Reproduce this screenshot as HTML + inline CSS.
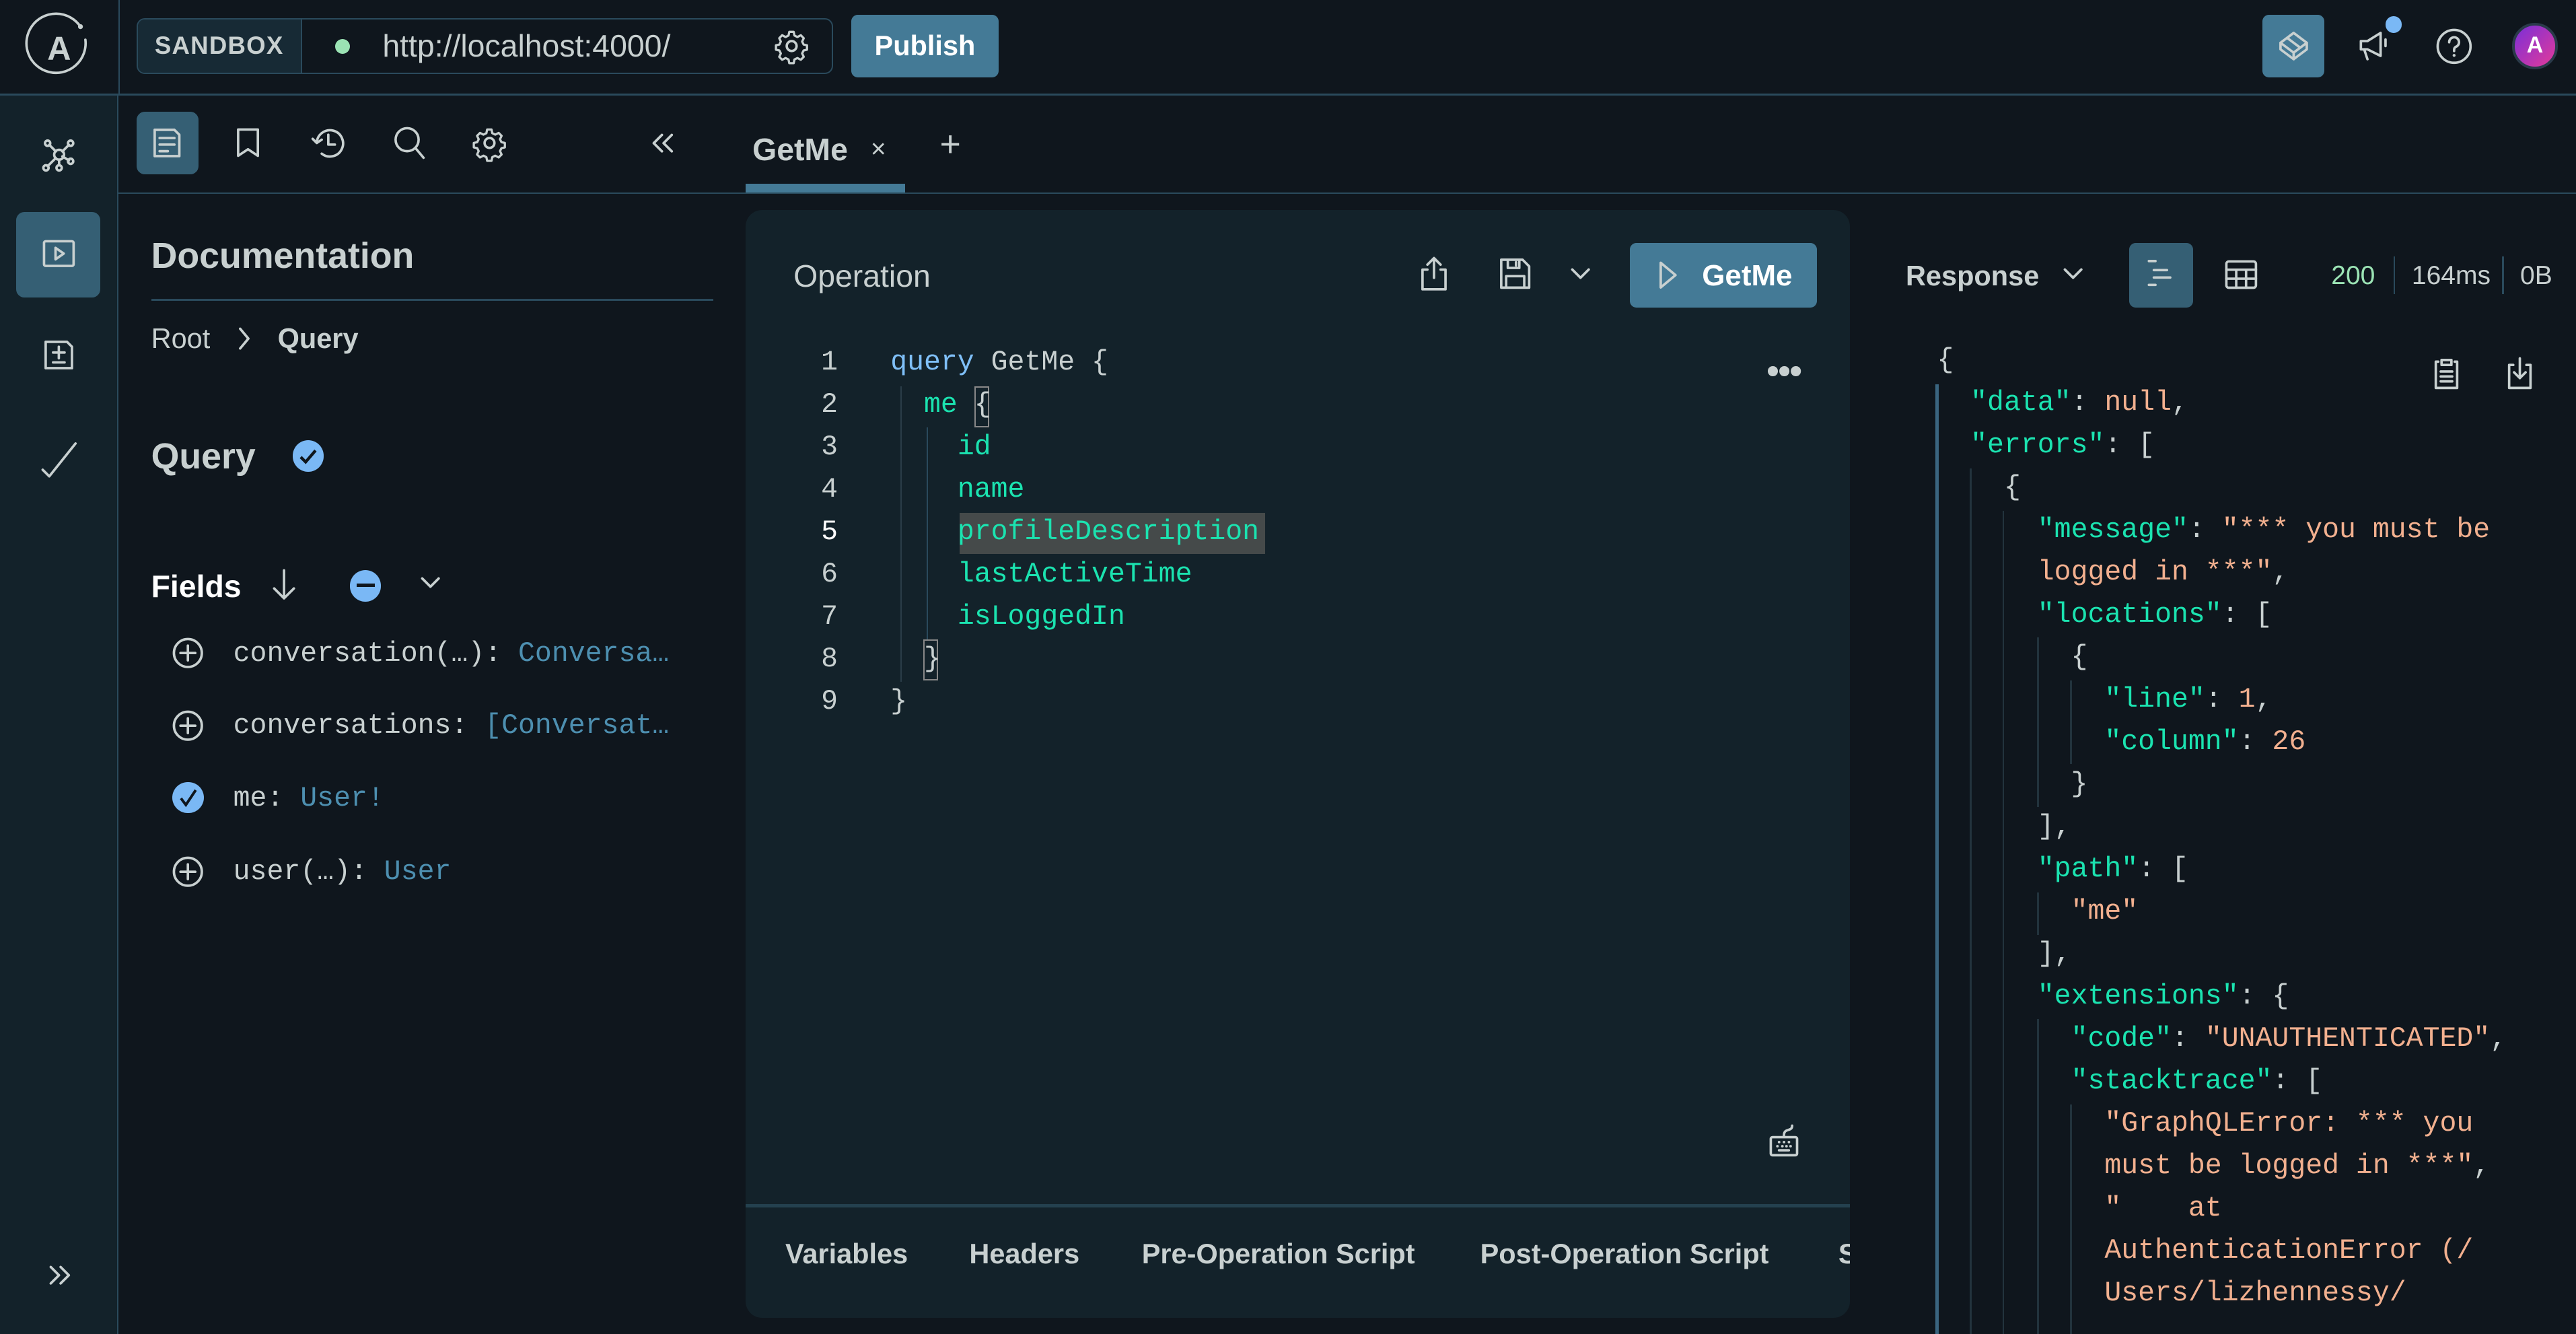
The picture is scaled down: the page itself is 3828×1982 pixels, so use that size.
<!DOCTYPE html>
<html><head><meta charset="utf-8"><style>
*{box-sizing:border-box;margin:0;padding:0}
html,body{width:3828px;height:1982px;overflow:hidden;background:#0f161d}
#w{zoom:2.44133;width:1568px;height:812px;position:relative;background:#0f161d;font-family:"Liberation Sans",sans-serif;color:#c8d0d0}
.a{position:absolute}
.mono{font-family:"Liberation Mono",monospace;font-size:17px;white-space:pre}
svg{position:absolute;overflow:visible}
.ic{fill:none;stroke:#c8d0d0;stroke-width:1.5;stroke-linecap:round;stroke-linejoin:round}
.k{color:#1be3b0}.s{color:#f2b08f}.p{color:#c8d0d0}.q{color:#7fbff7}.t{color:#4d8fb0}
.gl{position:absolute;width:1px;background:#22333d}
</style></head><body><div id="w">

<!-- left rail -->
<div class="a" style="left:0;top:57px;width:72px;height:755px;background:#13222a;border-right:1px solid #2a4a5c"></div>
<div class="a" style="left:72px;top:0;width:1px;height:57px;background:#2a4a5c"></div>
<div class="a" style="left:0;top:57px;width:1568px;height:1px;background:#2a4a5c"></div>
<div class="a" style="left:72px;top:117px;width:1496px;height:1px;background:#2a4a5c"></div>

<!-- logo -->
<svg style="left:16px;top:8px" width="40" height="40"><path class="ic" stroke-width="1.8" d="M33 8 A18 18 0 1 0 36 16"/><circle cx="33" cy="8" r="1.5" fill="#c8d0d0"/><text x="20" y="28" text-anchor="middle" font-family="Liberation Sans" font-weight="bold" font-size="20" fill="#c8d0d0">A</text></svg>

<!-- sandbox bar -->
<div class="a" style="left:83px;top:11px;width:424px;height:34px;border:1px solid #2a4a5c;border-radius:5px;overflow:hidden">
 <div class="a" style="left:0;top:0;width:100px;height:34px;background:#172a35;border-right:1px solid #2a4a5c;font-size:15px;font-weight:bold;line-height:32px;text-align:center;letter-spacing:.5px">SANDBOX</div>
 <div class="a" style="left:120px;top:12px;width:9px;height:9px;border-radius:50%;background:#9be3b4"></div>
 <div class="a" style="left:149px;top:4px;font-size:19px;line-height:24px">http://localhost:4000/</div>
</div>
<svg style="left:472px;top:18px" width="20" height="20"><circle class="ic" cx="10" cy="10" r="3"/><path class="ic" d="M8.5 1.5h3l.5 2.5 2 1 2.3-1.2 2 2-1.1 2.3 1 2 2.3.5v3l-2.3.5-1 2 1.1 2.3-2 2-2.3-1.2-2 1-.5 2.5h-3l-.5-2.5-2-1-2.3 1.2-2-2 1.1-2.3-1-2-2.3-.5v-3l2.3-.5 1-2-1.1-2.3 2-2 2.3 1.2 2-1z" transform="scale(0.9) translate(1,0)"/></svg>
<div class="a" style="left:518px;top:9px;width:90px;height:38px;background:#447a96;border-radius:4px;color:#fff;font-weight:bold;font-size:17px;line-height:38px;text-align:center">Publish</div>

<!-- top right -->
<div class="a" style="left:1377px;top:9px;width:38px;height:38px;background:#447a96;border-radius:4px"></div>
<svg style="left:1386px;top:18px" width="20" height="20"><path class="ic" stroke="#fff" d="M10 2 L18 8 L18 12 L10 18 L2 12 L2 8 Z M2 8 L10 14 L18 8 M10 14 L10 18 M6 5 L14 11"/></svg>
<svg style="left:1434px;top:18px" width="22" height="20"><path class="ic" d="M3 7h4l8-5v14l-8-4H3z M5 12l2 6 M18 6v4"/></svg>
<div class="a" style="left:1452px;top:10px;width:10px;height:10px;border-radius:50%;background:#7ab8f5"></div>
<svg style="left:1483px;top:17px" width="22" height="22"><circle class="ic" cx="11" cy="11" r="10"/><path class="ic" d="M8 8.5a3 3 0 1 1 4 2.8c-.8.4-1 1-1 2v.5"/><circle cx="11" cy="16.5" r=".9" fill="#c8d0d0"/></svg>
<div class="a" style="left:1529px;top:14px;width:28px;height:28px;border-radius:50%;background:linear-gradient(135deg,#7a2fd8,#e33a9a);border:2px solid #2a3a4a;color:#fff;font-weight:bold;font-size:14px;line-height:24px;text-align:center">A</div>

<!-- rail icons -->
<svg style="left:25px;top:83px" width="22" height="22"><circle class="ic" cx="11" cy="11" r="3"/><circle class="ic" cx="4" cy="4" r="1.6"/><circle class="ic" cx="18" cy="4" r="1.6"/><circle class="ic" cx="18" cy="15" r="1.6"/><circle class="ic" cx="3" cy="19" r="1.6"/><circle class="ic" cx="11" cy="19" r="1.6"/><path class="ic" d="M5 5l4 4M17 5l-4 4M13 12l4 2.5M9 13l-5 5M11 14v3.5"/></svg>
<div class="a" style="left:10px;top:129px;width:51px;height:52px;background:#355f74;border-radius:5px"></div>
<svg style="left:26px;top:146px" width="20" height="18"><rect class="ic" x="1" y="1" width="18" height="15" rx="1"/><path class="ic" d="M8 5l5 3.5-5 3.5z"/></svg>
<svg style="left:26px;top:206px" width="20" height="20"><path class="ic" d="M2 2h13l3 3v13H2z M10 5v7 M6.5 8.5h7 M6.5 14.5h7"/></svg>
<svg style="left:25px;top:268px" width="22" height="22"><path class="ic" d="M1 18l4 4L21 2"/></svg>
<svg style="left:30px;top:770px" width="14" height="12"><path class="ic" d="M1 1l5 5-5 5M7 1l5 5-5 5"/></svg>

<!-- second row icons -->
<div class="a" style="left:83px;top:68px;width:38px;height:38px;background:#355f74;border-radius:5px"></div>
<svg style="left:92px;top:77px" width="20" height="20"><path class="ic" d="M2 2h12l3 3v13H2z M5 7h9 M5 11h9 M5 15h5"/></svg>
<svg style="left:143px;top:78px" width="16" height="20"><path class="ic" d="M2 1h12v16l-6-4-6 4z"/></svg>
<svg style="left:189px;top:77px" width="22" height="20"><path class="ic" d="M4 10a8 8 0 1 1 3 6.5M4 10l-2.5-2.5M4 10l3-2M11 5v6h4"/></svg>
<svg style="left:239px;top:77px" width="22" height="22"><circle class="ic" cx="9" cy="8" r="7"/><path class="ic" d="M14 13l5 6"/></svg>
<svg style="left:288px;top:77px" width="20" height="20"><circle class="ic" cx="10" cy="10" r="3"/><path class="ic" d="M8.5 1h3l.5 2.5 2 1 2.3-1.2 2 2-1.1 2.3 1 2 2.3.5v3l-2.3.5-1 2 1.1 2.3-2 2-2.3-1.2-2 1-.5 2.5h-3l-.5-2.5-2-1-2.3 1.2-2-2 1.1-2.3-1-2-2.3-.5v-3l2.3-.5 1-2-1.1-2.3 2-2 2.3 1.2 2-1z" transform="scale(0.9) translate(1,1)"/></svg>
<svg style="left:397px;top:81px" width="14" height="12"><path class="ic" d="M6 1L1 6l5 5M12 1L7 6l5 5"/></svg>
<div class="a" style="left:458px;top:79px;font-size:19px;font-weight:bold;line-height:24px">GetMe</div>
<div class="a" style="left:530px;top:80px;font-size:16px;line-height:22px">×</div>
<div class="a" style="left:572px;top:75px;font-size:22px;line-height:26px">+</div>
<div class="a" style="left:454px;top:112px;width:97px;height:5px;background:#447a96"></div>

<!-- documentation panel -->
<div class="a" style="left:92px;top:143px;font-size:22px;font-weight:bold;line-height:26px">Documentation</div>
<div class="a" style="left:92px;top:182px;width:342px;height:1px;background:#2a4a5c"></div>
<div class="a" style="left:92px;top:195px;font-size:17px;line-height:22px">Root</div>
<svg style="left:144px;top:199px" width="10" height="14"><path class="ic" stroke="#8a9a9e" d="M2 1l5 6-5 6"/></svg>
<div class="a" style="left:169px;top:195px;font-size:17px;font-weight:bold;line-height:22px">Query</div>
<div class="a" style="left:92px;top:265px;font-size:22px;font-weight:bold;line-height:26px">Query</div>
<div class="a" style="left:178px;top:268px;width:19px;height:19px;border-radius:50%;background:#7ab8f5"></div>
<svg style="left:181px;top:271px" width="13" height="13"><path fill="none" stroke="#0f161d" stroke-width="1.8" d="M2 7l3 3 6-7"/></svg>
<div class="a" style="left:92px;top:345px;font-size:19px;font-weight:bold;line-height:24px;color:#fff">Fields</div>
<svg style="left:166px;top:346px" width="14" height="20"><path class="ic" d="M7 1v17M1 12l6 6 6-6"/></svg>
<div class="a" style="left:213px;top:347px;width:19px;height:19px;border-radius:50%;background:#7ab8f5"></div>
<div class="a" style="left:217px;top:355px;width:11px;height:2px;background:#0f161d"></div>
<svg style="left:256px;top:351px" width="12" height="8"><path class="ic" d="M1 1l5 5 5-5"/></svg>

<svg style="left:105px;top:388px" width="19" height="19"><circle class="ic" cx="9.5" cy="9.5" r="8.5"/><path class="ic" d="M9.5 5v9M5 9.5h9"/></svg>
<div class="a mono" style="left:142px;top:387px;line-height:22px">conversation(…): <span class="t">Conversa…</span></div>
<svg style="left:105px;top:432px" width="19" height="19"><circle class="ic" cx="9.5" cy="9.5" r="8.5"/><path class="ic" d="M9.5 5v9M5 9.5h9"/></svg>
<div class="a mono" style="left:142px;top:431px;line-height:22px">conversations: <span class="t">[Conversat…</span></div>
<div class="a" style="left:105px;top:476px;width:19px;height:19px;border-radius:50%;background:#7ab8f5"></div>
<svg style="left:108px;top:479px" width="13" height="13"><path fill="none" stroke="#0f161d" stroke-width="1.6" d="M2 7l3 4 6-9"/></svg>
<div class="a mono" style="left:142px;top:475px;line-height:22px">me: <span class="t">User!</span></div>
<svg style="left:105px;top:521px" width="19" height="19"><circle class="ic" cx="9.5" cy="9.5" r="8.5"/><path class="ic" d="M9.5 5v9M5 9.5h9"/></svg>
<div class="a mono" style="left:142px;top:520px;line-height:22px">user(…): <span class="t">User</span></div>

<!-- operation panel -->
<div class="a" style="left:454px;top:128px;width:672px;height:674px;background:#13222a;border-radius:10px"></div>
<div class="a" style="left:483px;top:156px;font-size:19px;line-height:24px">Operation</div>
<svg style="left:864px;top:156px" width="18" height="22"><path class="ic" d="M9 1v12M5 5l4-4 4 4M5 8H2v12h14V8h-3"/></svg>
<svg style="left:912px;top:156px" width="21" height="21"><path class="ic" d="M2 2h13l4 4v13H2z M6 2v5h7V2 M5 19v-7h11v7 M11 3.5v2"/></svg>
<svg style="left:956px;top:163px" width="12" height="8"><path class="ic" d="M1 1l5 5 5-5"/></svg>
<div class="a" style="left:992px;top:148px;width:114px;height:39px;background:#447a96;border-radius:4px"></div>
<svg style="left:1009px;top:159px" width="13" height="17"><path class="ic" stroke="#fff" d="M2 1l9 7.5-9 7.5z"/></svg>
<div class="a" style="left:1036px;top:156px;font-size:18px;font-weight:bold;color:#fff;line-height:24px">GetMe</div>

<!-- code -->
<div class="a mono" style="left:490px;top:208px;line-height:25.8px;color:#c8d0d0;text-align:right;width:20px">1
2
3
4
<span style="color:#fff">5</span>
6
7
8
9</div>
<div class="gl" style="left:548px;top:235px;height:180px;background:#2a3d48"></div>
<div class="gl" style="left:564px;top:260px;height:130px;background:#2a4a5c"></div>
<div class="a" style="left:584px;top:312px;width:186px;height:25px;background:#454a4a"></div>
<div class="a" style="left:593px;top:235px;width:9px;height:25px;border:1px solid #888"></div>
<div class="a" style="left:562px;top:389px;width:9px;height:25px;border:1px solid #888"></div>
<div class="a mono" style="left:542px;top:208px;line-height:25.8px"><span class="q">query</span> GetMe {
  <span class="k">me</span> {
    <span class="k">id</span>
    <span class="k">name</span>
    <span class="k">profileDescription</span>
    <span class="k">lastActiveTime</span>
    <span class="k">isLoggedIn</span>
  }
}</div>
<div class="a" style="left:1076px;top:223px;width:6px;height:6px;border-radius:50%;background:#c8d0d0;box-shadow:7px 0 #c8d0d0,14px 0 #c8d0d0"></div>
<svg style="left:1077px;top:684px" width="18" height="22"><path class="ic" d="M14 1c0 4-5 1-5 6 M2 8h14a1 1 0 0 1 1 1v9a1 1 0 0 1-1 1H2a1 1 0 0 1-1-1V9a1 1 0 0 1 1-1z M6 16h6"/><path class="ic" stroke-width="1.8" d="M6 11h.1M9 11h.1M12 11h.1M5 13.5h.1M8 13.5h.1M10.5 13.5h.1M13 13.5h.1"/></svg>
<div class="a" style="left:454px;top:733px;width:672px;height:2px;background:#24414f"></div>
<div class="a" style="left:478px;top:752px;font-size:17px;font-weight:bold;line-height:22px">Variables</div>
<div class="a" style="left:590px;top:752px;font-size:17px;font-weight:bold;line-height:22px">Headers</div>
<div class="a" style="left:695px;top:752px;font-size:17px;font-weight:bold;line-height:22px">Pre-Operation Script</div>
<div class="a" style="left:901px;top:752px;font-size:17px;font-weight:bold;line-height:22px">Post-Operation Script</div>
<div class="a" style="left:1119px;top:752px;width:7px;overflow:hidden;font-size:17px;font-weight:bold;line-height:22px">S</div>

<!-- response -->
<div class="a" style="left:1160px;top:157px;font-size:17px;font-weight:bold;line-height:22px">Response</div>
<svg style="left:1256px;top:163px" width="12" height="8"><path class="ic" d="M1 1l5 5 5-5"/></svg>
<div class="a" style="left:1296px;top:148px;width:39px;height:39px;background:#355f74;border-radius:4px"></div>
<svg style="left:1305px;top:157px" width="22" height="22"><path class="ic" d="M3 2h4M6 7.5h8M6 12h10M3 16.5h4"/></svg>
<svg style="left:1354px;top:158px" width="20" height="18"><rect class="ic" x="1" y="1" width="18" height="16" rx="1.5"/><path class="ic" d="M1 6h18M1 11.5h18M7 6v11M13 6v11"/></svg>
<div class="a" style="left:1419px;top:157px;font-size:16px;line-height:22px;color:#9be3b4">200</div>
<div class="a" style="left:1457px;top:156px;width:1px;height:23px;background:#2a4a5c"></div>
<div class="a" style="left:1468px;top:157px;font-size:16px;line-height:22px">164ms</div>
<div class="a" style="left:1523px;top:156px;width:1px;height:23px;background:#2a4a5c"></div>
<div class="a" style="left:1534px;top:157px;font-size:16px;line-height:22px">0B</div>
<svg style="left:1481px;top:217px" width="16" height="20"><path class="ic" d="M3 3H1.5v16h13V3H13 M5 2h6v3H5z M4.5 9h7M4.5 12h7M4.5 15h7"/></svg>
<svg style="left:1526px;top:217px" width="16" height="20"><path class="ic" d="M4 5H1.5v14h13V5H12 M8 1v12M4.5 9.5L8 13l3.5-3.5"/></svg>

<!-- json guides -->
<div class="gl" style="left:1178px;top:234px;height:580px;width:2px;background:#3a6580"></div>
<div class="gl" style="left:1199px;top:285px;height:529px"></div>
<div class="gl" style="left:1219px;top:311px;height:503px"></div>
<div class="gl" style="left:1240px;top:388px;height:103px"></div>
<div class="gl" style="left:1260px;top:414px;height:51px"></div>
<div class="gl" style="left:1240px;top:543px;height:26px"></div>
<div class="gl" style="left:1240px;top:620px;height:194px"></div>
<div class="gl" style="left:1260px;top:672px;height:142px"></div>

<div class="a mono" style="left:1179px;top:207px;line-height:25.8px"><span class="p">{</span>
  <span class="k">"data"</span>: <span class="s">null</span>,
  <span class="k">"errors"</span>: [
    {
      <span class="k">"message"</span>: <span class="s">"*** you must be</span>
      <span class="s">logged in ***"</span>,
      <span class="k">"locations"</span>: [
        {
          <span class="k">"line"</span>: <span class="s">1</span>,
          <span class="k">"column"</span>: <span class="s">26</span>
        }
      ],
      <span class="k">"path"</span>: [
        <span class="s">"me"</span>
      ],
      <span class="k">"extensions"</span>: {
        <span class="k">"code"</span>: <span class="s">"UNAUTHENTICATED"</span>,
        <span class="k">"stacktrace"</span>: [
          <span class="s">"GraphQLError: *** you</span>
          <span class="s">must be logged in ***"</span>,
          <span class="s">"    at</span>
          <span class="s">AuthenticationError (/</span>
          <span class="s">Users/lizhennessy/</span></div>

</div></body></html>
